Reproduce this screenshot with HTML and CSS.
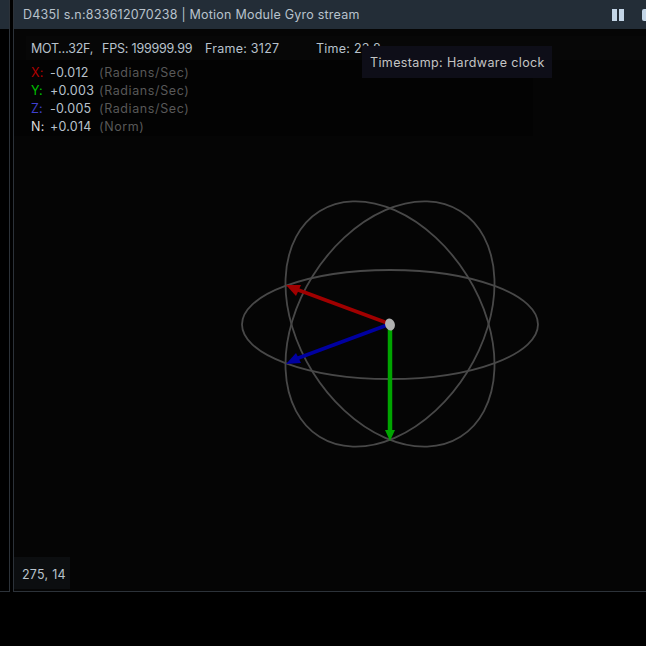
FILE: index.html
```html
<!DOCTYPE html>
<html lang="en">
  <head>
    <meta charset="UTF-8" />
    <meta name="viewport" content="width=device-width, initial-scale=1.0" />
    <title>Motion Module Gyro stream</title>
    <link rel="stylesheet" href="styles.css">
  </head>
  <body>
    <main class="viewer">
      <aside class="side">
        <div class="side__bar"></div>
      </aside>
      <section class="stream">
        <header class="stream__bar">
          <h1 class="stream__title">D435I s.n:833612070238 | Motion Module Gyro stream</h1>
          <div class="stream__controls">
            <span class="pause"><i></i><i></i></span>
            <span class="stop"></span>
          </div>
        </header>
        <div class="stream__body">
          <div class="stats">
            <span class="stats__cell stats__cell_name">MOT…32F,</span>
            <span class="stats__cell stats__cell_fps">FPS: 199999.99</span>
            <span class="stats__cell stats__cell_frame">Frame: 3127</span>
            <span class="stats__cell">Time: 23.8</span>
          </div>
          <div class="axes">
            <div class="axes__label axes__label_x">X:</div>
            <div class="axes__value">-0.012</div>
            <div class="axes__unit">(Radians/Sec)</div>
            <div class="axes__label axes__label_y">Y:</div>
            <div class="axes__value">+0.003</div>
            <div class="axes__unit">(Radians/Sec)</div>
            <div class="axes__label axes__label_z">Z:</div>
            <div class="axes__value">-0.005</div>
            <div class="axes__unit">(Radians/Sec)</div>
            <div class="axes__label">N:</div>
            <div class="axes__value">+0.014</div>
            <div class="axes__unit">(Norm)</div>
          </div>
          <div class="tooltip">Timestamp: Hardware clock</div>
          <svg class="gyro" viewBox="14 29 632 562" width="632" height="562" aria-hidden="true">
            <g class="gyro__rings">
              <ellipse cx="390" cy="324.5" rx="148" ry="54.5" />
              <ellipse cx="390" cy="324" rx="133" ry="91" transform="rotate(58 390 324)" />
              <ellipse cx="390" cy="324" rx="133" ry="91" transform="rotate(-58 390 324)" />
            </g>
            <line class="gyro__x" x1="390" y1="324" x2="293" y2="288" />
            <polygon class="gyro__x-head" points="286,285 301,285 296,296" />
            <line class="gyro__z" x1="390" y1="324" x2="293" y2="360" />
            <polygon class="gyro__z-head" points="286,364 296,353 301,363" />
            <line class="gyro__y" x1="390" y1="324" x2="390" y2="432" />
            <polygon class="gyro__y-head" points="390,441 385,430 395,430" />
            <ellipse class="gyro__hub" cx="390" cy="324.5" rx="4.8" ry="6" transform="rotate(-20 390 324.5)" />
          </svg>
          <div class="coords">275, 14</div>
        </div>
      </section>
    </main>
  </body>
</html>
```

FILE: styles.css
```css
:root {
  --bar-color: #232d37;
  --line-color: #2c3239;
  --text-color: #b8c2cc;
  --panel-color: #050505;
}

* {
  box-sizing: border-box;
  margin: 0;
  padding: 0;
}
html,
body {
  width: 646px;
  height: 646px;
  overflow: hidden;
  background-color: #000;
}
body {
  font-family: "Inter", "Liberation Sans", sans-serif;
  font-size: 12.5px;
  letter-spacing: 0.25px;
  color: var(--text-color);
}
.viewer {
  display: flex;
  gap: 3px;
  height: 592px;
}
.side {
  width: 10px;
  flex-shrink: 0;
  border-right: solid 1px var(--line-color);
  border-bottom: solid 1px var(--line-color);
}
.side__bar {
  height: 29px;
  background-color: var(--bar-color);
}
.stream {
  flex: 1;
  min-width: 0;
  overflow: hidden;
  display: flex;
  flex-direction: column;
  border-left: solid 1px var(--line-color);
  border-bottom: solid 1px var(--line-color);
}
.stream__bar {
  height: 29px;
  flex-shrink: 0;
  display: flex;
  align-items: center;
  padding-left: 9px;
  background-color: var(--bar-color);
}
.stream__title {
  width: 589px;
  flex-shrink: 0;
  font-size: 12.5px;
  font-weight: 400;
  letter-spacing: 0.23px;
  white-space: nowrap;
}
.stream__controls {
  display: flex;
  flex-shrink: 0;
  gap: 18px;
  align-items: center;
}
.pause {
  display: flex;
  gap: 2px;
}
.pause i {
  width: 5px;
  height: 12px;
  background-color: #c3d5e6;
}
.stop {
  width: 12px;
  height: 12px;
  border-radius: 2px;
  background-color: #c3d5e6;
}
.stream__body {
  position: relative;
  flex: 1;
  background-color: var(--panel-color);
}
.gyro {
  position: absolute;
  left: 0;
  top: 0;
}
.gyro__rings {
  fill: none;
  stroke: #484848;
  stroke-width: 1.8;
}
.gyro__x {
  stroke: #a00000;
  stroke-width: 3.5;
}
.gyro__x-head {
  fill: #a00000;
}
.gyro__y {
  stroke: #00a400;
  stroke-width: 4.5;
}
.gyro__y-head {
  fill: #00a400;
}
.gyro__z {
  stroke: #0000a0;
  stroke-width: 3.5;
}
.gyro__z-head {
  fill: #0000a0;
}
.gyro__hub {
  fill: #b0b0b0;
}
.stats {
  position: absolute;
  left: 12px;
  top: 7px;
  width: 620px;
  height: 24px;
  display: flex;
  align-items: center;
  padding-left: 5px;
  background-color: #070707;
  white-space: nowrap;
}
.stats__cell_name {
  width: 71px;
  letter-spacing: -0.2px;
}
.stats__cell_fps {
  width: 103px;
  letter-spacing: -0.2px;
}
.stats__cell_frame {
  width: 111px;
}
.axes {
  position: absolute;
  left: 0;
  top: 31px;
  width: 519px;
  height: 76px;
  display: grid;
  grid-template-columns: 19px 49px 1fr;
  grid-auto-rows: 18px;
  align-content: start;
  padding: 5px 0 0 17px;
  background-color: #030303;
}
.axes__label {
  color: #ddd;
}
.axes__label_x {
  color: #b00000;
}
.axes__label_y {
  color: #00c000;
}
.axes__label_z {
  color: #4040d0;
}
.axes__unit {
  color: #585858;
  letter-spacing: 0.6px;
}
.tooltip {
  position: absolute;
  left: 348px;
  top: 17px;
  width: 190px;
  height: 32px;
  line-height: 34px;
  padding-left: 8px;
  background-color: #0e0e18;
  color: #c4c4c4;
  letter-spacing: 0.37px;
  white-space: nowrap;
}
.coords {
  position: absolute;
  left: 0;
  bottom: 2px;
  width: 56px;
  height: 32px;
  line-height: 36px;
  padding-left: 8px;
  background-color: #0c0e10;
}
```
